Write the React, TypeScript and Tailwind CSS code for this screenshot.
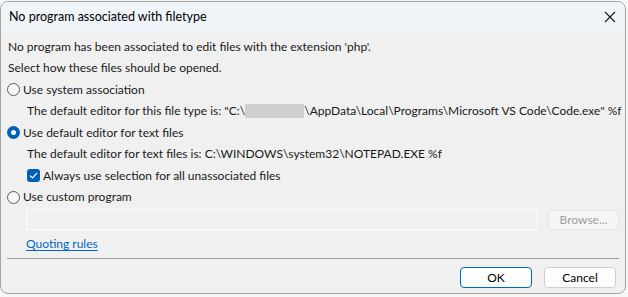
import React from 'react';

const font = "font-['Segoe_UI','Lato','Liberation_Sans',sans-serif]";

const Radio: React.FC<{ checked?: boolean }> = ({ checked }) =>
    checked ? (
        <span className="flex h-[13px] w-[13px] shrink-0 items-center justify-center rounded-full bg-[#005fb8]">
            <span className="h-[5px] w-[5px] rounded-full bg-white" />
        </span>
    ) : (
        <span className="h-[13px] w-[13px] shrink-0 rounded-full border border-[#5c5c5c] bg-[#f7f7f7]" />
    );

const Row: React.FC<{ children: React.ReactNode; indent?: string }> = ({ children, indent = 'pl-[7px]' }) => (
    <div className={`flex h-[21.5px] items-center whitespace-nowrap ${indent}`}>{children}</div>
);

export default function App() {
    return (
        <div className={`h-[297px] w-[628px] overflow-hidden bg-[#f7f7f7] text-[12px] text-[#1a1a1a] ${font}`}>
            <div className="ml-0 mt-[1px] flex h-[293px] w-[626px] flex-col overflow-hidden rounded-[8px] border border-[#a3a3a3] bg-[#f0f0f0]">
                {/* title bar */}
                <div className="flex h-[30px] shrink-0 items-center justify-between bg-[#eff4f9] pl-[8px] pr-[8px]">
                    <span className="text-[12.5px] text-black">No program associated with filetype</span>
                    <svg width="12" height="12" viewBox="0 0 12 12" className="mr-[1px]">
                        <path d="M1 1 L11 11 M11 1 L1 11" stroke="#1a1a1a" strokeWidth="1.1" />
                    </svg>
                </div>

                <div className="flex flex-1 flex-col pt-[4px]">
                    <Row>No program has been associated to edit files with the extension 'php'.</Row>
                    <Row>Select how these files should be opened.</Row>
                    <Row indent="pl-[6px]">
                        <Radio />
                        <span className="ml-[3px]">Use system association</span>
                    </Row>
                    <Row indent="pl-[26px]">
                        The default editor for this file type is: "C:\
                        <span className="mx-0 inline-block h-[14px] w-[59px] bg-[#cfcfcf]" />
                        \AppData\Local\Programs\Microsoft VS Code\Code.exe" %f
                    </Row>
                    <Row indent="pl-[6px]">
                        <Radio checked />
                        <span className="ml-[3px]">Use default editor for text files</span>
                    </Row>
                    <Row indent="pl-[26px]">The default editor for text files is: C:\WINDOWS\system32\NOTEPAD.EXE %f</Row>
                    <Row indent="pl-[26px]">
                        <span className="flex h-[13px] w-[13px] items-center justify-center rounded-[3px] bg-[#005fb8]">
                            <svg width="9" height="9" viewBox="0 0 9 9">
                                <path d="M1 4.6 L3.4 7 L8 2" stroke="white" strokeWidth="1.2" fill="none" />
                            </svg>
                        </span>
                        <span className="ml-[3px]">Always use selection for all unassociated files</span>
                    </Row>
                    <Row indent="pl-[6px]">
                        <Radio />
                        <span className="ml-[3px]">Use custom program</span>
                    </Row>

                    <div className="mt-[1px] flex items-center pl-[25px]">
                        <div className="h-[21px] w-[512px] border border-[#fbfbfb] bg-[#f0f0f0]" />
                        <div className="ml-[10px] flex h-[20px] w-[71px] items-center justify-center rounded-[4px] border border-[#e5e5e5] bg-[#f5f5f5] text-[#9d9d9d]">
                            Browse...
                        </div>
                    </div>

                    <div className="flex h-[28px] items-center pl-[25px]">
                        <span className="text-[#0066cc] underline underline-offset-2">Quoting rules</span>
                    </div>

                    <div className="mx-[6px] h-px bg-[#a0a0a0]" />

                    <div className="mt-[8px] flex justify-end gap-[12px] pr-[9px]">
                        <button className="flex h-[21px] w-[72px] items-center justify-center rounded-[4px] border border-[#0067c0] bg-[#fdfdfd] text-black">
                            OK
                        </button>
                        <button className="flex h-[21px] w-[72px] items-center justify-center rounded-[4px] border border-[#d0d0d0] bg-[#fdfdfd] text-black">
                            Cancel
                        </button>
                    </div>
                </div>
            </div>
        </div>
    );
}
